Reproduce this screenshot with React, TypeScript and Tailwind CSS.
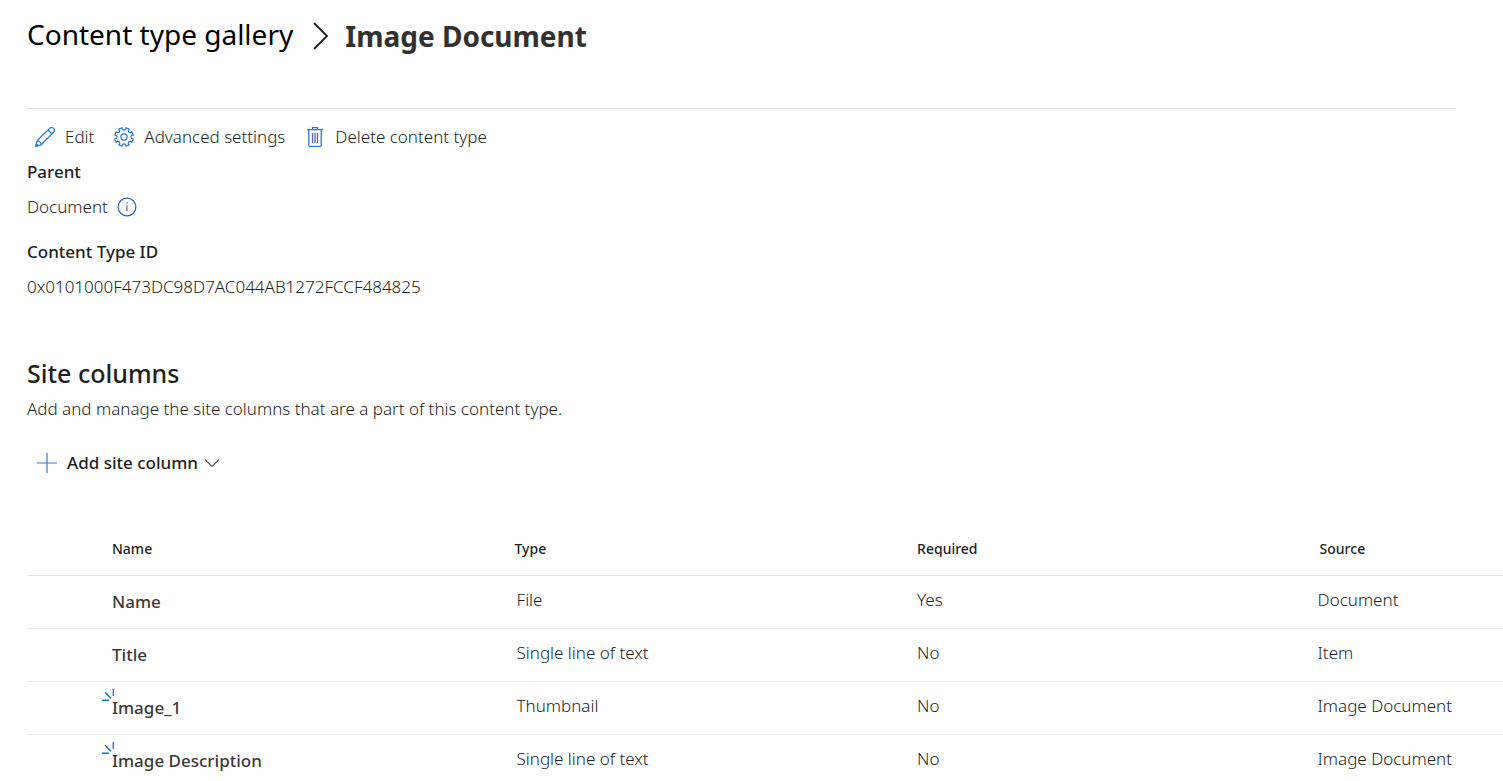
import { ReactNode } from "react";

type SiteColumn = {
  name: string;
  type: string;
  required: string;
  source: string;
  isNew?: boolean;
};

const siteColumns: SiteColumn[] = [
  { name: "Name", type: "File", required: "Yes", source: "Document" },
  { name: "Title", type: "Single line of text", required: "No", source: "Item" },
  { name: "Image_1", type: "Thumbnail", required: "No", source: "Image Document", isNew: true },
  { name: "Image Description", type: "Single line of text", required: "No", source: "Image Document", isNew: true },
];

const EditIcon = () => (
  <svg className="size-5" viewBox="0 0 20 20" fill="none" stroke="#2b7cd3" strokeWidth="1.3" strokeLinejoin="round">
    <path d="M.8 19.2l1.2-5.4L14.6 1.4a2.5 2.5 0 0 1 3.9 3.9L6.2 17.8z" />
    <path d="M13 3l3.9 3.9M2 13.8c2.3 0 4.2 1.7 4.2 4" />
    <path d="M.8 19.2l.6-2.4 1.8 1.8z" fill="#2b7cd3" />
  </svg>
);

// eight teeth with round notches between them, around a ring
const teeth = [0, 45, 90, 135, 180, 225, 270, 315];
const gearPoints = teeth
  .flatMap((deg) =>
    [
      [-20, 6.9],
      [-11, 7.6],
      [-11, 9.5],
      [11, 9.5],
      [11, 7.6],
      [20, 6.9],
    ].map(([offset, radius]) => {
      const angle = ((deg + 22.5 + offset) * Math.PI) / 180;
      return `${(10 + radius * Math.cos(angle)).toFixed(2)},${(10 + radius * Math.sin(angle)).toFixed(2)}`;
    })
  )
  .join(" ");

const GearIcon = () => (
  <svg className="size-5" viewBox="0 0 20 20" fill="none" stroke="#2b7cd3" strokeWidth="1.2" strokeLinejoin="round">
    <polygon points={gearPoints} />
    <circle cx="10" cy="10" r="3.1" />
  </svg>
);

const TrashIcon = () => (
  <svg className="size-5" viewBox="0 0 20 20" fill="none" stroke="#2b7cd3" strokeWidth="1.3">
    <path d="M2 2.6h16M7.5 2.6V.6h5v2M3.8 2.6v15.3q0 1.5 1.5 1.5h9.4q1.5 0 1.5-1.5V2.6" />
    <path d="M7.5 6v10M10 6v10M12.5 6v10" stroke="#5b62c4" />
  </svg>
);

const InfoIcon = () => (
  <svg className="size-5" viewBox="0 0 20 20" fill="none" stroke="#2166c2" strokeWidth="1.2">
    <circle cx="10" cy="10" r="8.9" />
    <path d="M10 8.3v6M10 5.3v1.4" stroke="#6a62b8" />
  </svg>
);

const NewMark = () => (
  <svg className="absolute -left-[10px] -top-[7px] h-3 w-[13px]" viewBox="0 0 13 12" fill="none" stroke="#0f78d4" strokeWidth="1.5">
    <path d="M0 11.2h7M3 3.2l6 6" />
    <path d="M11.3 0v7" stroke="#5d6cc9" />
  </svg>
);

const CommandButton = ({ icon, label }: { icon: ReactNode; label: string }) => (
  <button type="button" className="flex h-10 cursor-pointer items-center gap-[10px]">
    {icon}
    <span>{label}</span>
  </button>
);

export default function App() {
  return (
    <main className="overflow-hidden bg-white pl-[27px] font-['Noto_Sans','Open_Sans',sans-serif] text-[17px] font-light leading-6 text-[#201f1e]">
      <header className="mr-[47px] flex h-[109px] items-start border-b border-[#e1e1e1] pt-4">
        <a href="#gallery" className="mr-5 text-[28px] font-normal leading-9 text-black">
          Content type gallery
        </a>
        <svg className="mr-4 mt-1 h-8 w-4" viewBox="0 0 16 32" fill="none" stroke="#201f1e" strokeWidth="1.8">
          <path d="M1 3l13 13L1 29" />
        </svg>
        <h1 className="text-[28px] font-bold leading-10 text-[#323130]">Image Document</h1>
      </header>

      <div className="flex gap-5 pl-2 pt-2">
        <CommandButton icon={<EditIcon />} label="Edit" />
        <CommandButton icon={<GearIcon />} label="Advanced settings" />
        <CommandButton icon={<TrashIcon />} label="Delete content type" />
      </div>

      <dl className="pt-[3px]">
        <dt className="font-medium">Parent</dt>
        <dd className="flex items-center gap-[9px] pb-[21px] pt-[11px]">
          Document
          <button type="button" aria-label="About the parent content type">
            <InfoIcon />
          </button>
        </dd>
        <dt className="font-medium">Content Type ID</dt>
        <dd className="pt-[11px]">0x0101000F473DC98D7AC044AB1272FCCF484825</dd>
      </dl>

      <section className="pt-[58px]">
        <h2 className="text-[25px] font-medium leading-8">Site columns</h2>
        <p className="pt-2">Add and manage the site columns that are a part of this content type.</p>

        <button type="button" className="mt-[22px] flex h-10 cursor-pointer items-center gap-[10px] pl-[10px] font-medium">
          <svg className="size-5" viewBox="0 0 20 20" fill="none" stroke="#3f73cc" strokeWidth="1.2">
            <path d="M0 10h20M10 0v20" />
          </svg>
          Add site column
          <svg className="-ml-1 h-2 w-4" viewBox="0 0 16 8" fill="none" stroke="#605e5c" strokeWidth="1.1">
            <path d="M1 .5l7 7 7-7" />
          </svg>
        </button>

        <table className="mt-[39px] w-full table-fixed border-collapse text-left">
          <thead>
            <tr className="h-[53px] border-b border-[#e5e5e5] text-sm">
              <th className="w-[85px]" />
              <th className="w-3/11 pt-[2px] font-medium">Name</th>
              <th className="w-3/11 pt-[2px] font-medium">Type</th>
              <th className="w-[27%] pt-[2px] font-medium">Required</th>
              <th className="pl-1 pt-[2px] font-medium">Source</th>
            </tr>
          </thead>
          <tbody>
            {siteColumns.map((column) => (
              <tr key={column.name} className="h-[53px] border-b border-[#edebe9]">
                <td />
                <th scope="row" className="font-medium text-[#3b3a39]">
                  <span className="relative">
                    {column.isNew && <NewMark />}
                    {column.name}
                  </span>
                </th>
                <td className="pb-1 pl-[2px]">{column.type}</td>
                <td className="pb-1">{column.required}</td>
                <td className="pb-1 pl-[2px]">{column.source}</td>
              </tr>
            ))}
          </tbody>
        </table>
      </section>
    </main>
  );
}
